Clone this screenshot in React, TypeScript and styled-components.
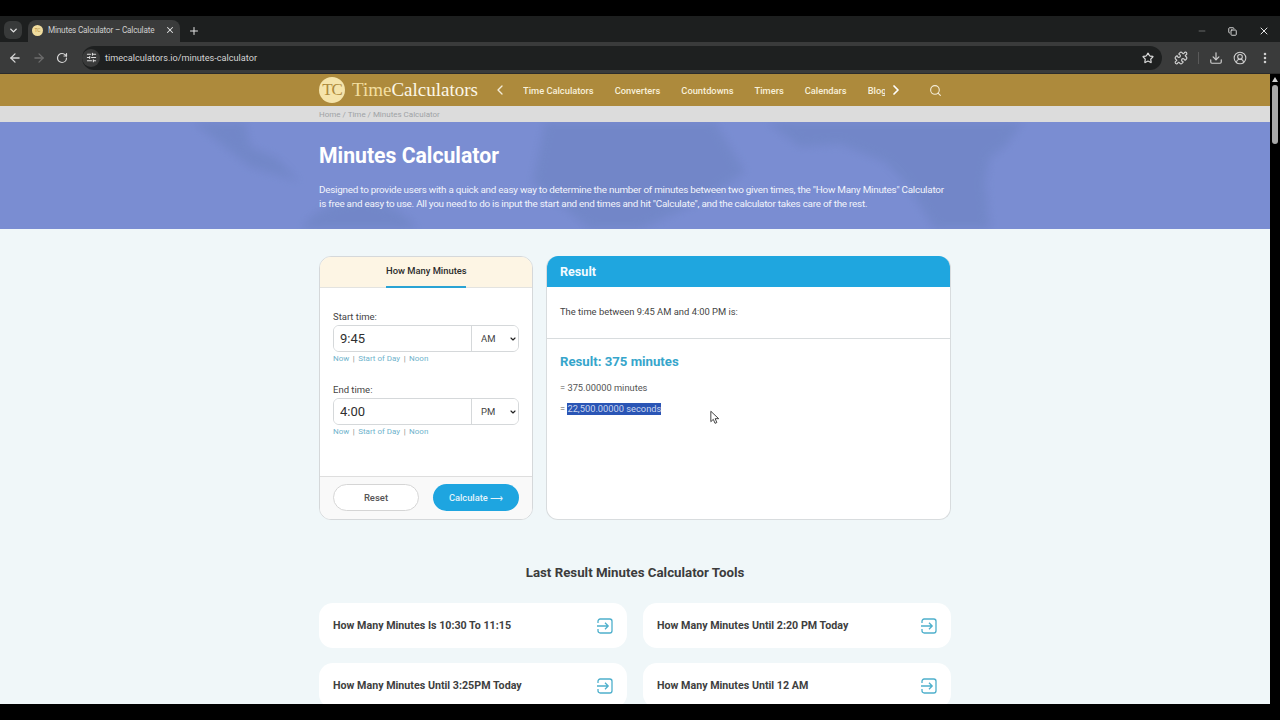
import styled, { createGlobalStyle } from 'styled-components';
import {
  ArrowLeft,
  ArrowRight,
  ChevronDown,
  ChevronLeft,
  ChevronRight,
  CircleUserRound,
  Copy,
  Download,
  EllipsisVertical,
  Minus,
  Plus,
  Puzzle,
  RotateCw,
  Search,
  SlidersHorizontal,
  Star,
  X,
} from 'lucide-react';

const GlobalStyle = createGlobalStyle`
  html, body {
    margin: 0;
    padding: 0;
    background: #000;
  }

  * {
    box-sizing: border-box;
  }

  body {
    font-family: Roboto, "Liberation Sans", sans-serif;
    color: #333;
  }
`;

const navItems = ['Time Calculators', 'Converters', 'Countdowns', 'Timers', 'Calendars'];
const quickLinks = ['Now', 'Start of Day', 'Noon'];
const tools = [
  'How Many Minutes Is 10:30 To 11:15',
  'How Many Minutes Until 2:20 PM Today',
  'How Many Minutes Until 3:25PM Today',
  'How Many Minutes Until 12 AM',
];

const ToolIcon = () => (
  <ToolSvg viewBox="0 0 18 18" fill="none">
    <path d="M2 6V4.2C2 2.9 2.9 2 4.2 2h9.6C15.1 2 16 2.9 16 4.2v9.6c0 1.3-.9 2.2-2.2 2.2H4.2C2.9 16 2 15.1 2 13.8V12" />
    <path d="M1 9h11M9 5.8 12.2 9 9 12.2" />
  </ToolSvg>
);

const TimeField = ({ label, time, period }: { label: string; time: string; period: string }) => (
  <Field>
    <FieldLabel>{label}</FieldLabel>
    <InputGroup>
      <TimeInput defaultValue={time} />
      <PeriodBox>
        <PeriodSelect defaultValue={period}>
          <option>AM</option>
          <option>PM</option>
        </PeriodSelect>
        <PeriodArrow>
          <ChevronDown size={8} strokeWidth={3.5} color="#222" />
        </PeriodArrow>
      </PeriodBox>
    </InputGroup>
    <Links>
      {quickLinks.map((link, i) => (
        <span key={link}>
          {i > 0 && <Sep>|</Sep>}
          {link}
        </span>
      ))}
    </Links>
  </Field>
);

const App = () => {
  return (
    <>
      <GlobalStyle />
      <Screen>
        <Browser>
          <TabStrip>
            <TabMenu>
              <ChevronDown size={11} strokeWidth={3} />
            </TabMenu>
            <Tab>
              <Favicon>TC</Favicon>
              <TabTitle>Minutes Calculator – Calculate</TabTitle>
              <X size={10} strokeWidth={2.5} color="#e4e4e4" />
            </Tab>
            <NewTab>
              <Plus size={12} strokeWidth={2} />
            </NewTab>
            <WindowControls>
              <Minus size={10} color="#777" />
              <Copy size={9} strokeWidth={2.4} />
              <X size={12} strokeWidth={2} />
            </WindowControls>
          </TabStrip>
          <Toolbar>
            <ArrowLeft size={14} strokeWidth={2.2} color="#d8d8d8" />
            <ArrowRight size={14} strokeWidth={2.2} color="#6d6d6d" />
            <RotateCw size={12} strokeWidth={2.4} color="#d8d8d8" />
            <Omnibox>
              <SiteInfo>
                <SlidersHorizontal size={11} strokeWidth={2.2} />
              </SiteInfo>
              <Url>timecalculators.io/minutes-calculator</Url>
              <Star size={12} strokeWidth={2.4} color="#d8d8d8" />
            </Omnibox>
            <ToolbarRight>
              <Puzzle size={14} strokeWidth={2} />
              <ToolbarDivider />
              <Download size={14} strokeWidth={2} />
              <CircleUserRound size={14} strokeWidth={1.8} />
              <EllipsisVertical size={14} strokeWidth={2.4} />
            </ToolbarRight>
          </Toolbar>

          <Viewport>
            <Page>
              <SiteHeader>
                <HeaderInner>
                  <Logo>
                    <LogoBadge>TC</LogoBadge>
                    <LogoText>
                      Time<b>Calculators</b>
                    </LogoText>
                  </Logo>
                  <ChevronLeft size={16} strokeWidth={2} color="#f4ecd8" />
                  <Nav>
                    {navItems.map(item => (
                      <NavItem key={item}>{item}</NavItem>
                    ))}
                    <NavClipped>Blog</NavClipped>
                  </Nav>
                  <NavNext>
                    <ChevronRight size={16} strokeWidth={2.6} color="#fff" />
                  </NavNext>
                  <SearchButton>
                    <Search size={13} strokeWidth={2} color="#f4ecd8" />
                  </SearchButton>
                </HeaderInner>
              </SiteHeader>

              <Breadcrumb>
                <Container>Home / Time / Minutes Calculator</Container>
              </Breadcrumb>

              <Hero>
                <WorldMap viewBox="0 0 1270 107" preserveAspectRatio="none">
                  <path d="M193 0h52l5 25 25 10 25 25-15-5-35-10-25-20z" />
                  <path d="M302 107c8-17 38-32 68-29 25 7 40 17 47 29z" />
                  <path d="M545 0h170l30 50-45 30-60 27h-50l-57-47z" />
                  <path d="M767 0h256l-18 25-15 10-5 25 5 47h-55l-30-47-20-20-45-18-40 3z" />
                </WorldMap>
                <HeroInner>
                  <HeroTitle>Minutes Calculator</HeroTitle>
                  <HeroText>
                    Designed to provide users with a quick and easy way to determine the number of
                    minutes between two given times, the "How Many Minutes" Calculator is free and
                    easy to use. All you need to do is input the start and end times and hit
                    "Calculate", and the calculator takes care of the rest.
                  </HeroText>
                </HeroInner>
              </Hero>

              <Content>
                <Calculators>
                  <FormCard>
                    <FormTabs>
                      <ActiveTab>How Many Minutes</ActiveTab>
                    </FormTabs>
                    <FormBody>
                      <TimeField label="Start time:" time="9:45" period="AM" />
                      <TimeField label="End time:" time="4:00" period="PM" />
                    </FormBody>
                    <FormFooter>
                      <ResetButton>Reset</ResetButton>
                      <CalculateButton>Calculate ⟶</CalculateButton>
                    </FormFooter>
                  </FormCard>

                  <ResultCard>
                    <ResultHeader>Result</ResultHeader>
                    <ResultIntro>The time between 9:45 AM and 4:00 PM is:</ResultIntro>
                    <ResultBody>
                      <ResultTitle>Result: 375 minutes</ResultTitle>
                      <ResultLine>= 375.00000 minutes</ResultLine>
                      <ResultLine>
                        = <Selected>22,500.00000 seconds</Selected>
                      </ResultLine>
                    </ResultBody>
                  </ResultCard>
                </Calculators>

                <SectionTitle>Last Result Minutes Calculator Tools</SectionTitle>
                <ToolGrid>
                  {tools.map(tool => (
                    <ToolCard key={tool}>
                      {tool}
                      <ToolIcon />
                    </ToolCard>
                  ))}
                </ToolGrid>
              </Content>
            </Page>

            <Scrollbar>
              <ScrollArrow />
              <ScrollThumb />
            </Scrollbar>

            <Cursor viewBox="0 0 12 17">
              <path d="M1 1v12.5l3-2.8 2 4.8 2.2-1-2-4.6h4.2z" />
            </Cursor>
          </Viewport>
        </Browser>
      </Screen>
    </>
  );
};

export default App;

const Screen = styled.div`
  width: 1280px;
  height: 720px;
  padding: 16px 0;
  background: #000;
  overflow: hidden;
`;

const Browser = styled.div`
  display: flex;
  flex-direction: column;
  height: 100%;
`;

const TabStrip = styled.div`
  display: flex;
  align-items: flex-end;
  height: 26px;
  padding: 4px 0 0 4px;
  background: #1d1f1f;
  color: #e4e4e4;
`;

const TabMenu = styled.div`
  display: flex;
  align-items: center;
  justify-content: center;
  width: 18px;
  height: 18px;
  margin: 0 6px 3px 0;
  border-radius: 6px;
  background: #383a3a;
`;

const Tab = styled.div`
  display: flex;
  align-items: center;
  width: 152px;
  height: 22px;
  padding: 0 5px 2px 4px;
  border-radius: 8px 8px 0 0;
  background: #3a3b3b;
`;

const Favicon = styled.div`
  display: flex;
  align-items: center;
  justify-content: center;
  flex: none;
  width: 11px;
  height: 11px;
  margin-right: 5px;
  border-radius: 50%;
  background: #f0dc9e;
  color: #b68d3c;
  font-size: 5px;
`;

const TabTitle = styled.div`
  width: 108px;
  margin-right: 9px;
  white-space: nowrap;
  font-size: 8.2px;
  letter-spacing: -0.19px;
  color: #cfcfcf;
`;

const NewTab = styled.div`
  display: flex;
  align-self: center;
  margin-left: 8px;
`;

const WindowControls = styled.div`
  display: flex;
  align-items: center;
  gap: 21px;
  align-self: center;
  margin-left: auto;
  padding-right: 10px;
`;

const Toolbar = styled.div`
  display: flex;
  align-items: center;
  height: 32px;
  padding: 0 8px;
  gap: 10px;
  background: #3a3b3b;
  border-bottom: 1px solid #2b2b2b;
`;

const Omnibox = styled.div`
  display: flex;
  align-items: center;
  flex: 1;
  height: 24px;
  margin: 0 2px 0 4px;
  padding-right: 8px;
  border-radius: 12px;
  background: #1e2020;
`;

const SiteInfo = styled.div`
  display: flex;
  align-items: center;
  justify-content: center;
  width: 18px;
  height: 18px;
  margin: 0 5px 0 0;
  border-radius: 50%;
  background: #3a3b3b;
  color: #e0e0e0;
`;

const Url = styled.div`
  flex: 1;
  font-size: 9.15px;
  color: #d4d4d4;
`;

const ToolbarRight = styled.div`
  display: flex;
  align-items: center;
  gap: 10px;
  color: #d0d0d0;

  svg:last-child {
    margin-left: 1px;
  }
`;

const ToolbarDivider = styled.div`
  width: 1px;
  height: 12px;
  background: #5a5a5a;
`;

const Viewport = styled.div`
  position: relative;
  display: flex;
  flex: 1;
  min-height: 0;
`;

const Page = styled.div`
  flex: 1;
  min-width: 0;
  overflow: hidden;
  background: #f0f7f9;
`;

const Container = styled.div`
  width: 632px;
  margin: 0 auto;
`;

const SiteHeader = styled.header`
  height: 32px;
  background: #ad8a3c;
`;

const HeaderInner = styled(Container)`
  display: flex;
  align-items: center;
  height: 100%;
`;

const Logo = styled.div`
  display: flex;
  align-items: center;
  flex: none;
  width: 173px;
`;

const LogoBadge = styled.div`
  display: flex;
  align-items: center;
  justify-content: center;
  flex: none;
  width: 26px;
  height: 26px;
  margin-right: 7px;
  border-radius: 50%;
  background: #f5e4ab;
  color: #ad8a3c;
  font-family: 'Liberation Serif', serif;
  font-size: 17px;
  letter-spacing: -1px;
`;

const LogoText = styled.div`
  font-family: 'Liberation Serif', serif;
  font-size: 19px;
  white-space: nowrap;
  color: #f3dfa0;

  b {
    font-weight: 400;
    color: #fbf6e6;
  }
`;

const Nav = styled.nav`
  display: flex;
  align-items: center;
  gap: 21px;
  width: 365px;
  margin-left: 15px;
  overflow: hidden;
`;

const NavItem = styled.span`
  flex: none;
  font-size: 9.3px;
  font-weight: 500;
  white-space: nowrap;
  color: #f8f0da;
`;

const NavClipped = styled(NavItem)`
  width: 17px;
  overflow: hidden;
`;

const NavNext = styled.div`
  display: flex;
`;

const SearchButton = styled.div`
  display: flex;
  margin-left: 25px;
`;

const Breadcrumb = styled.div`
  height: 16px;
  background: #dcdcdc;
  font-size: 8px;
  line-height: 17px;
  color: #9fa3a6;
`;

const Hero = styled.section`
  position: relative;
  height: 107px;
  background: #7a8dd2;
  overflow: hidden;
`;

const WorldMap = styled.svg`
  position: absolute;
  inset: 0;
  width: 100%;
  height: 100%;

  path {
    fill: #6c82c0;
    opacity: 0.55;
    filter: blur(5px);
  }
`;

const HeroInner = styled(Container)`
  position: relative;
  padding-top: 22px;
`;

const HeroTitle = styled.h1`
  margin: 0 0 15px;
  font-size: 21.2px;
  line-height: 24px;
  font-weight: 700;
  color: #fff;
`;

const HeroText = styled.p`
  margin: 0;
  font-size: 9.9px;
  line-height: 14px;
  letter-spacing: -0.245px;
  color: #f2f4fb;
`;

const Content = styled(Container)`
  padding-top: 27px;
`;

const Calculators = styled.div`
  display: grid;
  grid-template-columns: 214px 405px;
  gap: 13px;
  height: 264px;
`;

const FormCard = styled.div`
  display: flex;
  flex-direction: column;
  border: 1px solid #d5d8da;
  border-radius: 12px;
  background: #fff;
  overflow: hidden;
`;

const FormTabs = styled.div`
  display: flex;
  justify-content: center;
  flex: none;
  height: 31px;
  background: #fdf5e4;
  border-bottom: 1px solid #e3e3e0;
`;

const ActiveTab = styled.div`
  width: 80px;
  height: 31px;
  border-bottom: 2px solid #2aa3d4;
  font-size: 9.4px;
  font-weight: 500;
  line-height: 28px;
  text-align: center;
  white-space: nowrap;
  color: #2c2c2c;
`;

const FormBody = styled.div`
  display: flex;
  flex-direction: column;
  gap: 20px;
  flex: 1;
  padding: 23px 13px 0;
`;

const Field = styled.div`
  display: flex;
  flex-direction: column;
`;

const FieldLabel = styled.label`
  margin-bottom: 2px;
  font-size: 9.5px;
  line-height: 12px;
  color: #444;
`;

const InputGroup = styled.div`
  display: flex;
  height: 27px;
  border: 1px solid #d5d8da;
  border-radius: 6px;
  overflow: hidden;
`;

const TimeInput = styled.input`
  flex: 1;
  min-width: 0;
  padding: 0 6px;
  border: 0;
  border-right: 1px solid #d5d8da;
  outline: 0;
  font-family: inherit;
  font-size: 13px;
  color: #2f2f2f;
`;

const PeriodBox = styled.div`
  position: relative;
  flex: none;
  width: 46px;
`;

const PeriodSelect = styled.select`
  appearance: none;
  width: 100%;
  height: 100%;
  padding-left: 9px;
  border: 0;
  outline: 0;
  background: #fff;
  font-family: inherit;
  font-size: 9.5px;
  color: #444;
`;

const PeriodArrow = styled.span`
  position: absolute;
  top: 9px;
  right: 1px;
  display: flex;
  pointer-events: none;
`;

const Links = styled.div`
  margin-top: 1px;
  font-size: 8px;
  line-height: 11px;
  color: #6fb3cc;
`;

const Sep = styled.span`
  margin: 0 3.5px;
  color: #888;
`;

const FormFooter = styled.div`
  display: flex;
  justify-content: space-between;
  flex: none;
  height: 43px;
  padding: 7px 13px 0;
  background: #f9f9f9;
  border-top: 1px solid #dedede;
`;

const ResetButton = styled.button`
  width: 86px;
  height: 27px;
  border: 1px solid #d5d5d5;
  border-radius: 14px;
  background: #fff;
  font-family: inherit;
  font-size: 9.5px;
  font-weight: 500;
  color: #555;
`;

const CalculateButton = styled.button`
  width: 86px;
  height: 27px;
  padding: 0;
  border: 0;
  border-radius: 14px;
  background: #1ea5e0;
  font-family: inherit;
  font-size: 9.3px;
  font-weight: 500;
  color: #e4f4fb;
`;

const ResultCard = styled.div`
  display: flex;
  flex-direction: column;
  border: 1px solid #d8dcde;
  border-top: 0;
  border-radius: 12px;
  background: #fff;
  overflow: hidden;
`;

const ResultHeader = styled.div`
  height: 31px;
  padding-left: 13px;
  background: #1fa6df;
  font-size: 12.6px;
  font-weight: 700;
  line-height: 31px;
  color: #f3fbff;
`;

const ResultIntro = styled.div`
  height: 52px;
  padding: 19px 13px 0;
  border-bottom: 1px solid #d8dcde;
  font-size: 9.4px;
  line-height: 12px;
  color: #444;
`;

const ResultBody = styled.div`
  padding: 14px 13px 0;
`;

const ResultTitle = styled.h2`
  margin: 0 0 11px;
  font-size: 13.2px;
  line-height: 18px;
  font-weight: 700;
  color: #36a5cb;
`;

const ResultLine = styled.div`
  height: 21px;
  font-size: 9.3px;
  line-height: 12px;
  color: #555;
`;

const Selected = styled.span`
  padding: 0 0 1px;
  background: #2a55b5;
  color: #c9d4ee;
`;

const SectionTitle = styled.h2`
  margin: 44px 0 21px;
  font-size: 13.3px;
  line-height: 18px;
  font-weight: 700;
  text-align: center;
  color: #3c3c3c;
`;

const ToolGrid = styled.div`
  display: grid;
  grid-template-columns: 308px 308px;
  justify-content: space-between;
  gap: 15px 16px;
`;

const ToolCard = styled.a`
  display: flex;
  align-items: center;
  justify-content: space-between;
  height: 45px;
  padding: 0 13px 0 14px;
  border-radius: 14px;
  background: #fff;
  font-size: 10.7px;
  font-weight: 700;
  color: #3f3f3f;
`;

const ToolSvg = styled.svg`
  flex: none;
  width: 18px;
  height: 18px;
  stroke: #4fb0cc;
  stroke-width: 1.3;
`;

const Scrollbar = styled.div`
  width: 10px;
  flex: none;
  padding: 3px 2px 0;
  background: #000;
`;

const ScrollArrow = styled.div`
  width: 0;
  height: 0;
  margin-bottom: 3px;
  border-left: 3px solid transparent;
  border-right: 3px solid transparent;
  border-bottom: 5px solid #cfcfcf;
`;

const ScrollThumb = styled.div`
  width: 6px;
  height: 59px;
  border-radius: 3px;
  background: #a8a8a8;
`;

const Cursor = styled.svg`
  position: absolute;
  left: 710px;
  top: 336px;
  width: 10px;
  height: 15px;
  fill: #fff;
  stroke: #222;
  stroke-width: 1;
`;
